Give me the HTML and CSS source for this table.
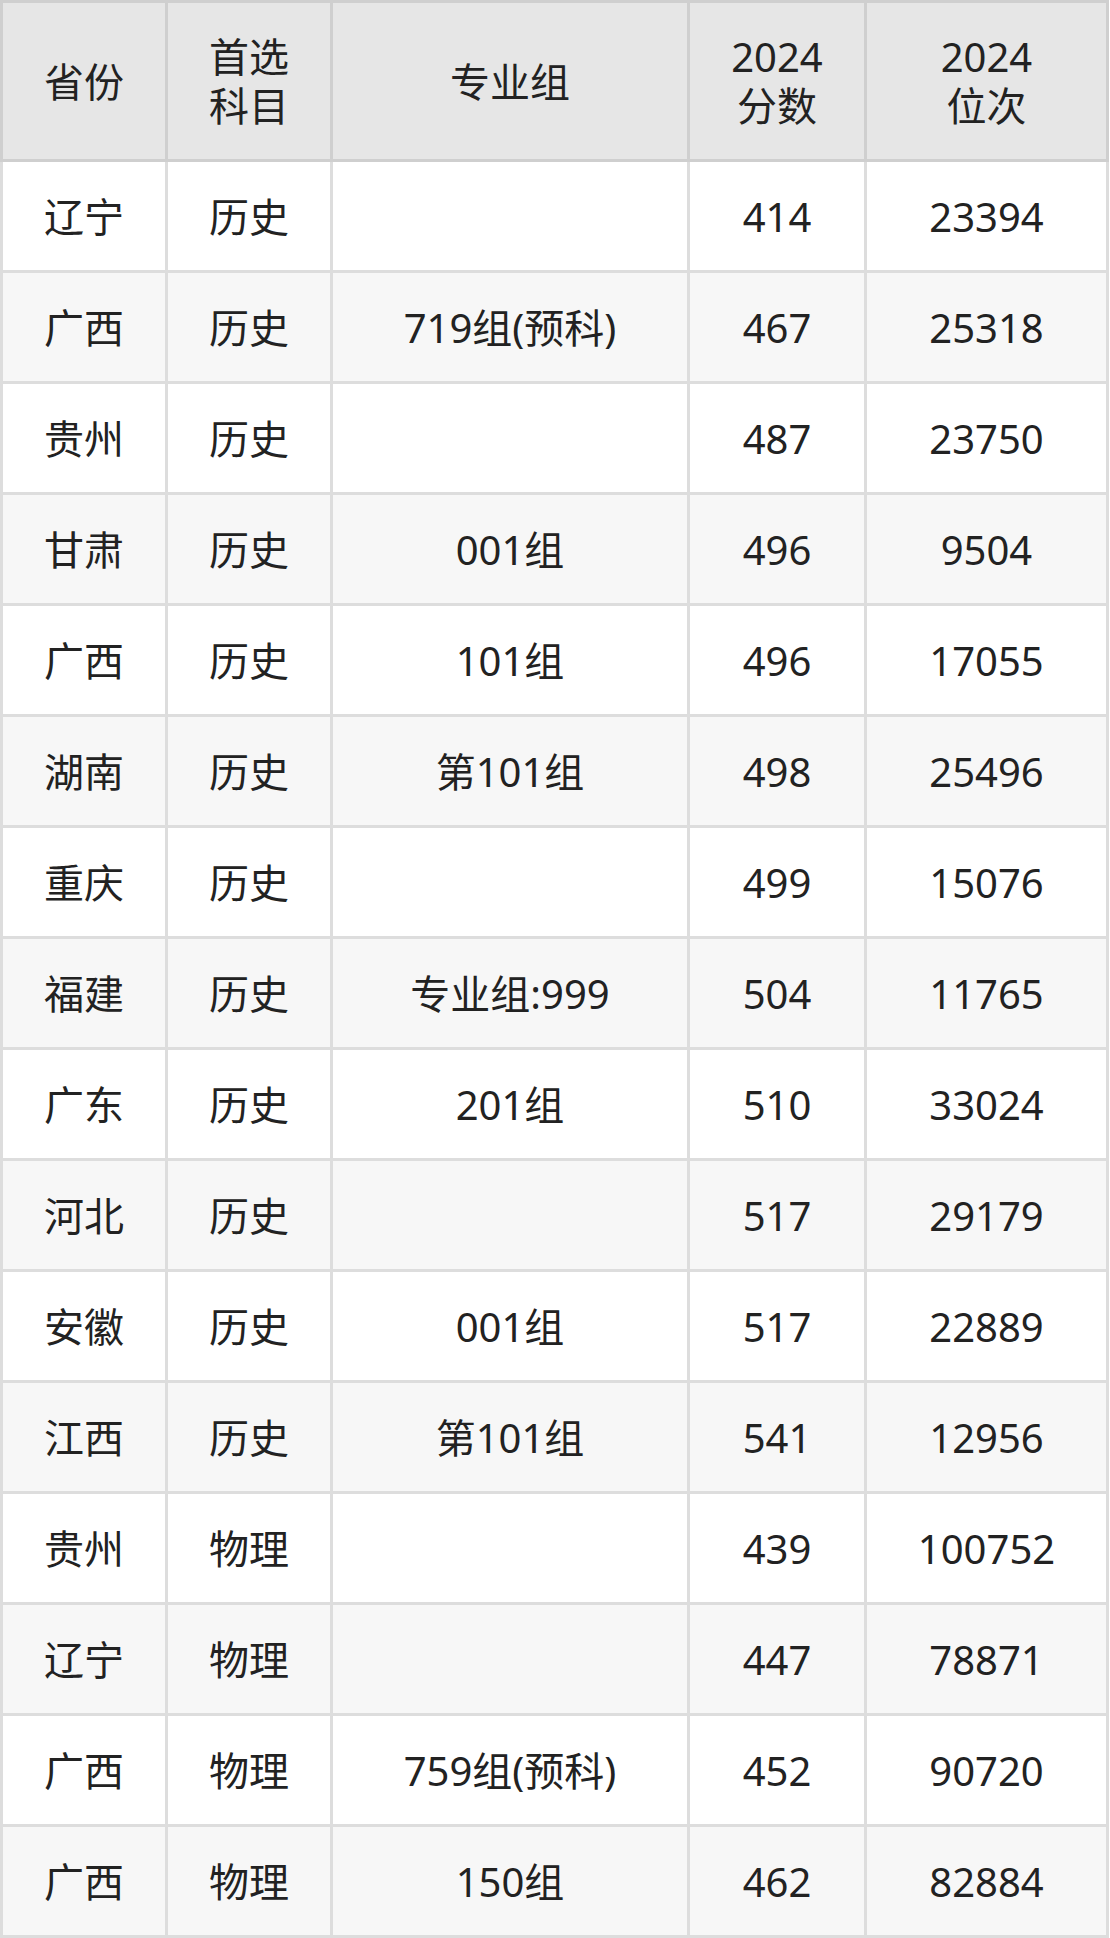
FILE: index.html
```html
<!DOCTYPE html>
<html lang="zh-CN">
<head>
<meta charset="utf-8">
<title>分数位次</title>
<link rel="stylesheet" href="styles.css">
</head>
<body>
<div class="table">
  <div class="row head">
    <div class="cell first">省份</div>
    <div class="cell">首选<br>科目</div>
    <div class="cell">专业组</div>
    <div class="cell">2024<br>分数</div>
    <div class="cell">2024<br>位次</div>
  </div>
  <div class="row"><div class="cell first">辽宁</div><div class="cell">历史</div><div class="cell"></div><div class="cell">414</div><div class="cell">23394</div></div>
  <div class="row alt"><div class="cell first">广西</div><div class="cell">历史</div><div class="cell">719组(预科)</div><div class="cell">467</div><div class="cell">25318</div></div>
  <div class="row"><div class="cell first">贵州</div><div class="cell">历史</div><div class="cell"></div><div class="cell">487</div><div class="cell">23750</div></div>
  <div class="row alt"><div class="cell first">甘肃</div><div class="cell">历史</div><div class="cell">001组</div><div class="cell">496</div><div class="cell">9504</div></div>
  <div class="row"><div class="cell first">广西</div><div class="cell">历史</div><div class="cell">101组</div><div class="cell">496</div><div class="cell">17055</div></div>
  <div class="row alt"><div class="cell first">湖南</div><div class="cell">历史</div><div class="cell">第101组</div><div class="cell">498</div><div class="cell">25496</div></div>
  <div class="row"><div class="cell first">重庆</div><div class="cell">历史</div><div class="cell"></div><div class="cell">499</div><div class="cell">15076</div></div>
  <div class="row alt"><div class="cell first">福建</div><div class="cell">历史</div><div class="cell">专业组:999</div><div class="cell">504</div><div class="cell">11765</div></div>
  <div class="row"><div class="cell first">广东</div><div class="cell">历史</div><div class="cell">201组</div><div class="cell">510</div><div class="cell">33024</div></div>
  <div class="row alt"><div class="cell first">河北</div><div class="cell">历史</div><div class="cell"></div><div class="cell">517</div><div class="cell">29179</div></div>
  <div class="row"><div class="cell first">安徽</div><div class="cell">历史</div><div class="cell">001组</div><div class="cell">517</div><div class="cell">22889</div></div>
  <div class="row alt"><div class="cell first">江西</div><div class="cell">历史</div><div class="cell">第101组</div><div class="cell">541</div><div class="cell">12956</div></div>
  <div class="row"><div class="cell first">贵州</div><div class="cell">物理</div><div class="cell"></div><div class="cell">439</div><div class="cell">100752</div></div>
  <div class="row alt"><div class="cell first">辽宁</div><div class="cell">物理</div><div class="cell"></div><div class="cell">447</div><div class="cell">78871</div></div>
  <div class="row"><div class="cell first">广西</div><div class="cell">物理</div><div class="cell">759组(预科)</div><div class="cell">452</div><div class="cell">90720</div></div>
  <div class="row alt"><div class="cell first">广西</div><div class="cell">物理</div><div class="cell">150组</div><div class="cell">462</div><div class="cell">82884</div></div>
</div>
</body>
</html>
```

FILE: styles.css
```css
html, body {
  margin: 0;
  padding: 0;
  background: #ffffff;
}

.table {
  width: 1109px;
  font-family: "Noto Sans", "Noto Sans CJK SC", sans-serif;
  font-size: 40px;
  color: #222222;
}

.row {
  display: grid;
  grid-template-columns: 168px 165px 357px 177px 242px;
  height: 111px;
  background: #ffffff;
}

.row.alt {
  background: #f7f7f7;
}

.cell {
  box-sizing: border-box;
  display: flex;
  align-items: center;
  justify-content: center;
  text-align: center;
  border-right: 3px solid #dddddd;
  border-bottom: 3px solid #dddddd;
  line-height: 49px;
}

.cell.first {
  border-left: 3px solid #dddddd;
}

.row.head {
  height: 162px;
  background: #e6e6e6;
}

.row.head .cell {
  border-color: #cfcfcf;
  border-top: 3px solid #cfcfcf;
}
```
